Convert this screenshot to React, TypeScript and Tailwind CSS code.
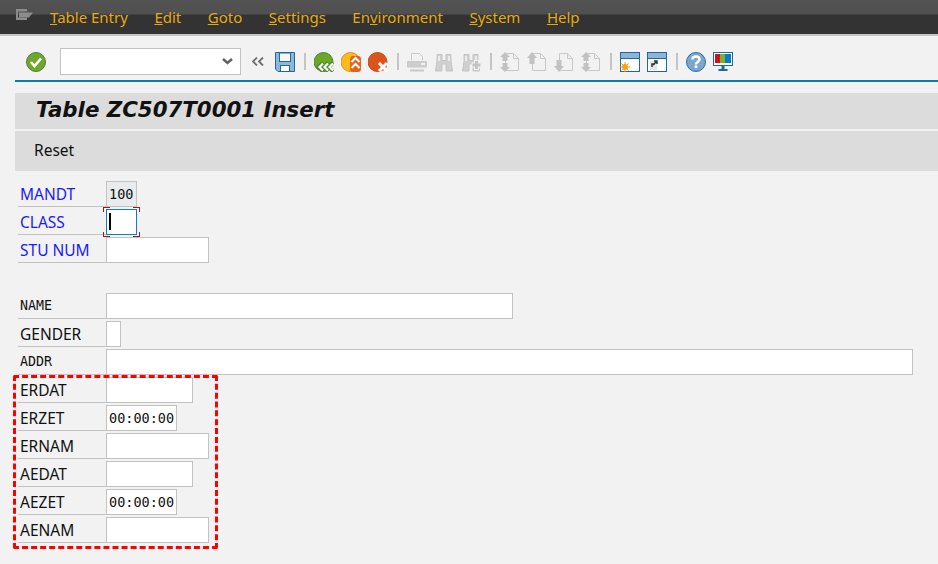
// SAP GUI table entry insert screen
const menus = [
  { hot: 'T', rest: 'able Entry' },
  { hot: 'E', rest: 'dit' },
  { hot: 'G', rest: 'oto' },
  { hot: 'S', rest: 'ettings' },
  { pre: 'En', hot: 'v', rest: 'ironment' },
  { hot: 'S', rest: 'ystem', },
  { hot: 'H', rest: 'elp' },
];

function Separator() {
  return <div className="ml-[9px] mr-[8px] w-[2px] h-[17px] bg-[#c4c4c4]" />;
}

function CheckIcon() {
  return (
    <svg width="20" height="20" viewBox="0 0 20 20">
      <circle cx="10" cy="10" r="9.5" fill="#6fa82c" stroke="#4f7f3a" />
      <path d="M5 10l3.5 4L15 6.5" fill="none" stroke="#fff" strokeWidth="2.6" />
    </svg>
  );
}

function SaveIcon() {
  return (
    <svg width="20" height="20" viewBox="0 0 20 20">
      <path d="M.5.5h19v19H3L.5 17z" fill="#8fb5d8" stroke="#1d6a9e" />
      <rect x="4.500" y="1" width="11" height="8.500" fill="#f4f6f8" stroke="#1d6a9e" />
      <rect x="5.500" y="13.500" width="9" height="6" fill="#fff" stroke="#1d6a9e" />
    </svg>
  );
}

function BackIcon() {
  return (
    <svg width="20" height="20" viewBox="0 0 20 20">
      <circle cx="9.5" cy="10" r="9.5" fill="#6aa826" stroke="#4f7f3a" />
      <path d="M9 10.500L4.500 15 9 19.500M14 10.500L9.500 15l4.500 4.500M19 10.500L14.500 15l4.500 4.500" fill="none" stroke="#4f8a2a" strokeWidth="3.600" />
      <path d="M9 11.500L5.500 15 9 18.500M14 11.500L10.500 15l3.500 3.500M19 11.500L15.500 15l3.500 3.500" fill="none" stroke="#fff" strokeWidth="2.200" />
    </svg>
  );
}

function ExitIcon() {
  return (
    <svg width="20" height="20" viewBox="0 0 20 20">
      <circle cx="9.5" cy="10" r="9.5" fill="#fbbc16" stroke="#e8862a" />
      <rect x="9" y="4" width="11" height="16" rx="3" fill="#e0641e" />
      <path d="M10.500 10l4-4 4 4M10.500 16l4-4 4 4" fill="none" stroke="#fff" strokeWidth="2" />
    </svg>
  );
}

function CancelIcon() {
  return (
    <svg width="20" height="20" viewBox="0 0 20 20">
      <circle cx="9.5" cy="10" r="9.5" fill="#d9551b" stroke="#c04a18" />
      <path d="M11 11l8 8M19 11l-8 8" stroke="#fff" strokeWidth="3" />
      <path d="M15 11v1M15 18v1M11 15h1M18 15h1" stroke="#d9551b" />
    </svg>
  );
}

function PrintIcon() {
  return (
    <svg width="20" height="20" viewBox="0 0 20 20" fill="none" stroke="#c8c8c8">
      <path d="M4.500 8V1.500h8l3 3V8" />
      <path d="M.5 9.500h19v5.500H.5z" fill="#cdcdcd" />
      <rect x="14" y="11" width="4" height="2" fill="#f2f2f2" stroke="none" />
      <path d="M3 18.500h14" strokeWidth="2" />
    </svg>
  );
}

function FindIcon({ plus }: { plus?: boolean }) {
  return (
    <svg width="20" height="20" viewBox="0 0 20 20">
      <path d="M3 2.500h5v6h4v-6h5v7l1.500 9.500h-6.500v-7H8v7H1.500L3 9.500z" fill="#d0d0d0" stroke="#c4c4c4" />
      <rect x="4" y="4" width="2" height="5" fill="#ececec" />
      <rect x="14" y="4" width="2" height="5" fill="#ececec" />
      {plus && (
        <>
          <path d="M15.500 8v10M10.500 13h10" stroke="#f2f2f2" strokeWidth="5" />
          <path d="M15.500 9v8M11.500 13h8" stroke="#c4c4c4" strokeWidth="3" />
        </>
      )}
    </svg>
  );
}

function PageIcon({ up, down }: { up?: boolean; down?: boolean }) {
  const both = up && down;
  return (
    <svg width="20" height="20" viewBox="0 0 20 20" fill="none" stroke="#c8c8c8">
      <path d="M5.500 1.500h8l5 5v12h-13z" />
      <path d="M13.500 1.500v5h5" />
      {up && <path d={both ? 'M5 0L0 5h2.500v4h5V5H10z' : 'M5 0L0 6h2.500v6h5V6H10z'} fill="#c2c2c2" stroke="none" />}
      {down && <path d={both ? 'M5 20L0 15h2.500v-4h5v4H10z' : 'M5 20l-5-6h2.500V8h5v6H10z'} fill="#c2c2c2" stroke="none" />}
    </svg>
  );
}

function WindowIcon({ shortcut }: { shortcut?: boolean }) {
  return (
    <svg width="20" height="20" viewBox="0 0 20 20">
      <rect x=".5" y=".5" width="19" height="19" fill="#fff" stroke="#1d6a9e" />
      <rect x="1" y="1" width="18" height="5" fill="#8fb3d6" />
      <path d="M1 6.500h18" stroke="#1d6a9e" />
      {shortcut ? (
        <>
          <rect x="3" y="9" width="7" height="9" fill="#e6e6e6" />
          <path d="M5 15v-3h3M6 13l3-3M7 9h3v3" fill="none" stroke="#333" strokeWidth="1.500" />
        </>
      ) : (
        <>
          <circle cx="5" cy="15" r="3" fill="#f7a30f" />
          <path d="M5 10v10M0 15h10M1.500 11.500l7 7M8.500 11.500l-7 7" stroke="#f7a30f" />
        </>
      )}
    </svg>
  );
}

function HelpIcon() {
  return (
    <svg width="20" height="20" viewBox="0 0 20 20">
      <circle cx="10" cy="10" r="9.5" fill="#7ba7cf" stroke="#2f6f9f" />
      <path d="M6.500 7.500C6.500 5.500 8 4.500 10 4.500s3.500 1 3.500 3-3.500 2.500-3.500 5" fill="none" stroke="#fff" strokeWidth="2.400" />
      <rect x="8.700" y="13.500" width="2.600" height="2.600" fill="#fff" />
    </svg>
  );
}

function MonitorIcon() {
  return (
    <svg width="20" height="20" viewBox="0 0 20 20">
      <rect x=".5" y=".5" width="19" height="13" fill="#fff" stroke="#1d6a9e" />
      <rect x="2" y="2" width="5" height="9" fill="#d0121b" />
      <rect x="7" y="2" width="5" height="9" fill="#7cb02c" />
      <rect x="12" y="2" width="6" height="9" fill="#0a7cc4" />
      <path d="M8.500 14h3v3h-3zM5.500 17h9v2h-9z" fill="#1d6a9e" />
    </svg>
  );
}

function Row({ label, width, value, mono, blue, focus, readOnly }: {
  label: string;
  width: string;
  value?: string;
  mono?: boolean;
  blue?: boolean;
  focus?: boolean;
  readOnly?: boolean;
}) {
  return (
    <div className="flex h-[28px] items-start">
      <div className={`w-[88px] h-[26px] border-b border-[#c2c2c2] pl-[2px] leading-[26px] ${blue ? 'text-[#1a1aff]' : 'text-[#111]'} ${mono ? "font-['DejaVu_Sans_Mono',monospace] text-[13.300px]" : 'text-[15.500px]'}`}>
        {label}
      </div>
      <div className={`relative h-[26px] border ${width} ${focus ? 'border-[#0a7fc4] bg-white' : readOnly ? 'border-[#c2c2c2] bg-[#e9ebec]' : 'border-[#c2c2c2] bg-white'} pl-[2px] font-['DejaVu_Sans_Mono',monospace] text-[13.500px] leading-[25px] text-[#111]`}>
        {value}
        {focus && (
          <>
            <div className="absolute left-[2px] top-[3px] w-[2px] h-[17px] bg-black" />
            <div className="absolute left-[-4px] top-[-3px] w-[7px] h-[5px] border-l border-t border-[#a01818]" />
            <div className="absolute right-[-4px] top-[-3px] w-[7px] h-[5px] border-r border-t border-[#a01818]" />
            <div className="absolute left-[-4px] bottom-[-3px] w-[7px] h-[5px] border-l border-b border-[#a01818]" />
            <div className="absolute right-[-4px] bottom-[-3px] w-[7px] h-[5px] border-r border-b border-[#a01818]" />
          </>
        )}
      </div>
    </div>
  );
}

export default function App() {
  return (
    <div className="w-[938px] h-[564px] overflow-hidden bg-[#f2f2f2] font-['Noto_Sans','Liberation_Sans',sans-serif]">
      <div className="h-[34px] flex bg-[linear-gradient(#525252_0,#505050_14px,#333333_15px,#333333_34px)]">
        <svg className="ml-[15px] mt-[8px]" width="18" height="13" viewBox="0 0 18 13">
          <path d="M1 1h11v2.500H3v6h9V12H1z" fill="#8c8c8c" />
          <path d="M4 4.500h14l-4 5H4z" fill="#8c8c8c" />
        </svg>
        <div className="ml-[17px] flex gap-[26.500px] pt-[4px] text-[15px] leading-[26px] text-[#e8a90f]">
          {menus.map((m) => (
            <span key={m.hot + m.rest}>
              {m.pre}
              <span className="underline">{m.hot}</span>
              {m.rest}
            </span>
          ))}
        </div>
      </div>
      <div className="h-[2px] bg-[#c6c6c6]" />

      <div className="ml-[15px] h-[46px] border-b-2 border-[#0a7bb8] flex items-center pl-[11px] pt-[7px]">
        <CheckIcon />
        <div className="ml-[14px] w-[181px] h-[27px] border border-[#c2c2c2] bg-white flex items-center justify-end pr-[7px]">
          <svg width="11" height="7" viewBox="0 0 11 7">
            <path d="M1 1l4.500 4L10 1" fill="none" stroke="#606060" strokeWidth="2.400" />
          </svg>
        </div>
        <svg className="ml-[11px]" width="12" height="9" viewBox="0 0 12 9">
          <path d="M5 .5L1 4.500l4 4M11 .5L7 4.500l4 4" fill="none" stroke="#6e6e6e" strokeWidth="1.800" />
        </svg>
        <div className="ml-[11px] flex items-center">
          <SaveIcon />
          <Separator />
          <div className="flex gap-[7px]">
            <BackIcon />
            <ExitIcon />
            <CancelIcon />
          </div>
          <Separator />
          <div className="flex gap-[7px]">
            <PrintIcon />
            <FindIcon />
            <FindIcon plus />
          </div>
          <Separator />
          <div className="flex gap-[7px]">
            <PageIcon up down />
            <PageIcon up />
            <PageIcon down />
            <PageIcon up down />
          </div>
          <Separator />
          <div className="flex gap-[7px]">
            <WindowIcon />
            <WindowIcon shortcut />
          </div>
          <Separator />
          <div className="flex gap-[7px]">
            <HelpIcon />
            <MonitorIcon />
          </div>
        </div>
      </div>

      <div className="ml-[15px] mt-[11px] h-[36px] bg-[#dcdcdc] pl-[21px] font-['DejaVu_Sans',sans-serif] text-[21.300px] font-bold italic leading-[34px] text-[#111]">
        Table ZC507T0001 Insert
      </div>
      <div className="ml-[15px] mt-[2px] h-[40px] bg-[#dcdcdc] pl-[19px] text-[15.500px] leading-[38px] text-[#111]">
        Reset
      </div>

      <div className="relative ml-[18px] mt-[10px]">
        <Row label="MANDT" width="w-[31px]" value="100" blue readOnly />
        <Row label="CLASS" width="w-[31px]" blue focus />
        <Row label="STU NUM" width="w-[103px]" blue />
        <div className="h-[28px]" />
        <Row label="NAME" width="w-[407px]" mono />
        <Row label="GENDER" width="w-[15px]" />
        <Row label="ADDR" width="w-[807px]" mono />
        <Row label="ERDAT" width="w-[87px]" />
        <Row label="ERZET" width="w-[71px]" value="00:00:00" />
        <Row label="ERNAM" width="w-[103px]" />
        <Row label="AEDAT" width="w-[87px]" />
        <Row label="AEZET" width="w-[71px]" value="00:00:00" />
        <Row label="AENAM" width="w-[103px]" />
        <div className="absolute left-[-5px] top-[194px] w-[205px] h-[174px] border-[3px] border-dashed border-[#ff0000] rounded-[2px]" />
      </div>
    </div>
  );
}
